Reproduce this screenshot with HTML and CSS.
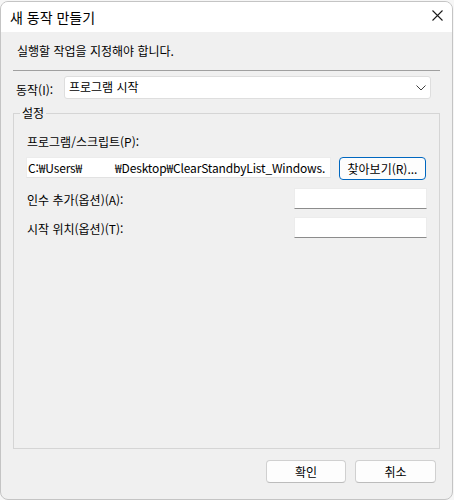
FILE: index.html
```html
<!DOCTYPE html>
<html lang="ko">
<head>
  <meta charset="UTF-8" />
  <meta name="viewport" content="width=device-width, initial-scale=1.0"/>
  <title>새 동작 만들기</title>
  <link rel="stylesheet" href="styles.css">
</head>
<body>
  <div class="window">
    <div class="titlebar">
      <span class="title">새 동작 만들기</span>
      <span class="close">
        <svg width="11" height="11" viewBox="0 0 11 11">
          <path d="M0.5 0.5 L10.5 10.5 M10.5 0.5 L0.5 10.5" stroke="#1b1b1b" stroke-width="1.1" fill="none"/>
        </svg>
      </span>
    </div>

    <div class="content">
      <div class="hint">실행할 작업을 지정해야 합니다.</div>
      <div class="separator"></div>

      <div class="action-row">
        <span class="action-label">동작(I):</span>
        <div class="select">
          <span>프로그램 시작</span>
          <svg width="10" height="6" viewBox="0 0 10 6">
            <path d="M0.5 0.5 L5 5 L9.5 0.5" stroke="#404040" stroke-width="1" fill="none"/>
          </svg>
        </div>
      </div>

      <fieldset class="settings">
        <legend>설정</legend>
        <div class="field-label">프로그램/스크립트(P):</div>
        <div class="program-row">
          <div class="textbox program">C:₩Users₩<span class="blank"></span>₩Desktop₩ClearStandbyList_Windows.</div>
          <button class="btn browse">찾아보기(R)...</button>
        </div>
        <div class="opt-row">
          <span>인수 추가(옵션)(A):</span>
          <div class="textbox small"></div>
        </div>
        <div class="opt-row">
          <span>시작 위치(옵션)(T):</span>
          <div class="textbox small"></div>
        </div>
      </fieldset>

      <div class="footer">
        <button class="btn">확인</button>
        <button class="btn cancel">취소</button>
      </div>
    </div>
  </div>
</body>
</html>
```

FILE: styles.css
```css
body {
  margin: 0;
  padding: 1px 0 0 0;
  background: #f6f6f6;
  font-family: "Noto Sans CJK KR", sans-serif;
  font-size: 12px;
  line-height: 16px;
  color: #000;
}

.window {
  box-sizing: border-box;
  width: 453px;
  height: 499px;
  border: 1px solid #c4c4c4;
  border-radius: 8px;
  overflow: hidden;
  background: #f0f0f0;
  display: flex;
  flex-direction: column;
}

.titlebar {
  height: 30px;
  flex: none;
  background: #fff;
  display: flex;
  align-items: center;
  justify-content: space-between;
  padding: 0 9px 0 9px;
}

.title {
  font-size: 14px;
  margin-top: -1px;
}

.close {
  display: flex;
  margin-top: -4px;
}

.content {
  flex: 1;
  display: flex;
  flex-direction: column;
  padding: 11px 12px 0 12px;
}

.hint {
  padding-left: 4px;
}

.separator {
  height: 1px;
  background: #a0a0a0;
  margin-top: 11px;
}

.action-row {
  display: flex;
  align-items: center;
  margin-top: 5px;
}

.action-label {
  width: 48px;
  padding-left: 3px;
  margin-top: 5px;
}

.select {
  box-sizing: border-box;
  width: 367px;
  height: 23px;
  background: #fff;
  border: 1px solid #dedede;
  border-radius: 3px;
  display: flex;
  align-items: center;
  justify-content: space-between;
  padding: 0 4px 0 4px;
}

.select span {
  margin-top: -1px;
}

.settings {
  flex: 1;
  margin: 6px 0 0 0;
  border: 1px solid #d5d5d5;
  padding: 13px 12px 0 12px;
  min-width: 0;
}

.settings legend {
  margin-left: -6px;
  padding: 0 2px;
}

.field-label {
  padding-left: 1px;
}

.program-row {
  display: flex;
  align-items: flex-start;
  gap: 8px;
  margin-top: 7px;
}

.textbox {
  box-sizing: border-box;
  height: 21px;
  background: #fff;
  border: 1px solid #ececec;
  border-bottom-color: #8c8c8c;
  white-space: nowrap;
  overflow: hidden;
}

.program {
  width: 305px;
  padding: 2px 0 0 1px;
  border-bottom-color: #e2e2e2;
  letter-spacing: -0.15px;
}

.blank {
  display: inline-block;
  width: 33px;
}

.small {
  width: 133px;
}

.opt-row {
  display: flex;
  align-items: center;
  justify-content: space-between;
  margin-top: 8px;
  padding-left: 1px;
}

.opt-row span {
  margin-top: 3px;
}

.btn {
  box-sizing: border-box;
  height: 23px;
  background: #fdfdfd;
  border: 1px solid #d0d0d0;
  border-bottom-color: #bcbcbc;
  border-radius: 4px;
  font-family: inherit;
  font-size: 12px;
  line-height: 16px;
  color: #000;
  padding: 0;
}

.browse {
  width: 87px;
  border: 1px solid #0067c0;
}

.footer {
  display: flex;
  justify-content: flex-end;
  gap: 9px;
  padding: 11px 4px 16px 0;
}

.footer .btn {
  width: 80px;
}

.footer .cancel {
  width: 81px;
}
```
